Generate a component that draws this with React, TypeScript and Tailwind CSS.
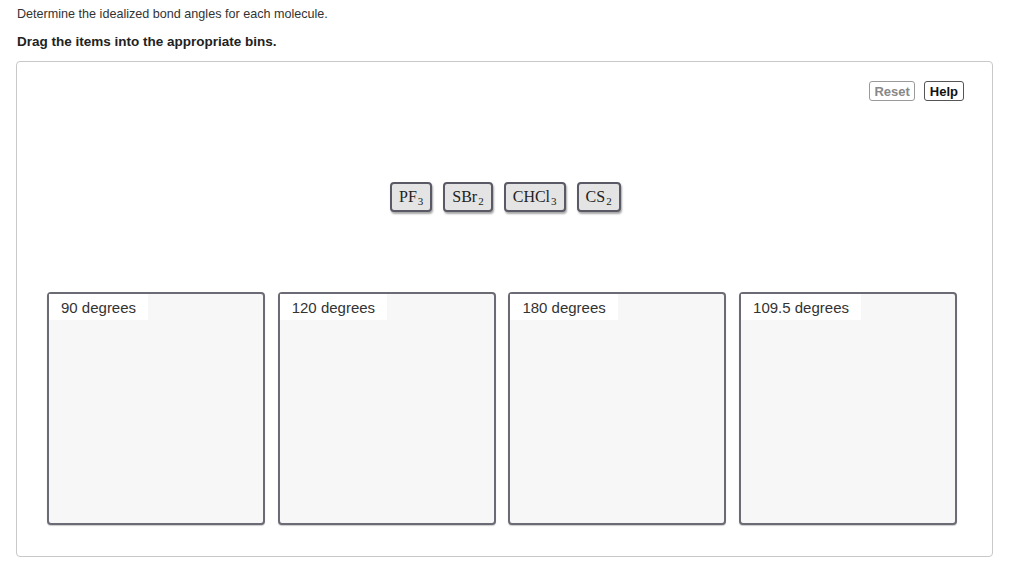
import React from "react";

type Chip = { base: string; sub: string };

const chips: Chip[] = [
  { base: "PF", sub: "3" },
  { base: "SBr", sub: "2" },
  { base: "CHCl", sub: "3" },
  { base: "CS", sub: "2" },
];

const bins = ["90 degrees", "120 degrees", "180 degrees", "109.5 degrees"];

function MoleculeChip({ chip }: { chip: Chip }) {
  return (
    <div className="h-[30px] px-[7px] flex items-center rounded-[4px] border-2 border-[#5a5a66] bg-[#e4e4e4] shadow-[1px_2px_2px_rgba(0,0,0,0.35)] text-[16px] text-[#222] [font-family:'Liberation_Serif',serif] leading-none">
      <span>
        {chip.base}
        <sub className="text-[11px] ml-[1px]">{chip.sub}</sub>
      </span>
    </div>
  );
}

function Bin({ label }: { label: string }) {
  return (
    <div className="w-[218px] h-[233px] rounded-[4px] border-2 border-[#6b6b75] bg-[#f7f7f7] shadow-[0_1px_1px_rgba(0,0,0,0.2)]">
      <div className="inline-block bg-white pl-[12px] pr-[12px] pt-[5px] pb-[3px] text-[15px] text-[#333] leading-[18px]">
        {label}
      </div>
    </div>
  );
}

export default function App() {
  return (
    <div className="w-[1024px] h-[565px] bg-white [font-family:'Liberation_Sans',Arial,sans-serif] text-[#333]">
      <div className="pl-[17px] pt-[6px]">
        <p className="text-[12.6px] leading-[16px]">Determine the idealized bond angles for each molecule.</p>
        <p className="text-[13.5px] leading-[16px] font-bold mt-[12px] text-[#222]">Drag the items into the appropriate bins.</p>
      </div>
      <div className="ml-[16px] mt-[11px] w-[977px] h-[496px] rounded-[4px] border border-[#c8c8c8] flex flex-col">
        <div className="flex justify-end gap-[9px] pt-[19px] pr-[28px]">
          <button className="h-[20px] px-[4px] rounded-[3px] border border-[#9a9a9a] bg-white text-[13px] font-bold text-[#888] leading-none">
            Reset
          </button>
          <button className="h-[20px] px-[5px] rounded-[3px] border border-[#555] bg-white text-[13px] font-bold text-[#111] leading-none">
            Help
          </button>
        </div>
        <div className="flex gap-[11px] pl-[373px] mt-[81px]">
          {chips.map((c) => (
            <MoleculeChip key={c.base} chip={c} />
          ))}
        </div>
        <div className="flex gap-[12.7px] pl-[30px] mt-[80px]">
          {bins.map((b) => (
            <Bin key={b} label={b} />
          ))}
        </div>
      </div>
    </div>
  );
}
